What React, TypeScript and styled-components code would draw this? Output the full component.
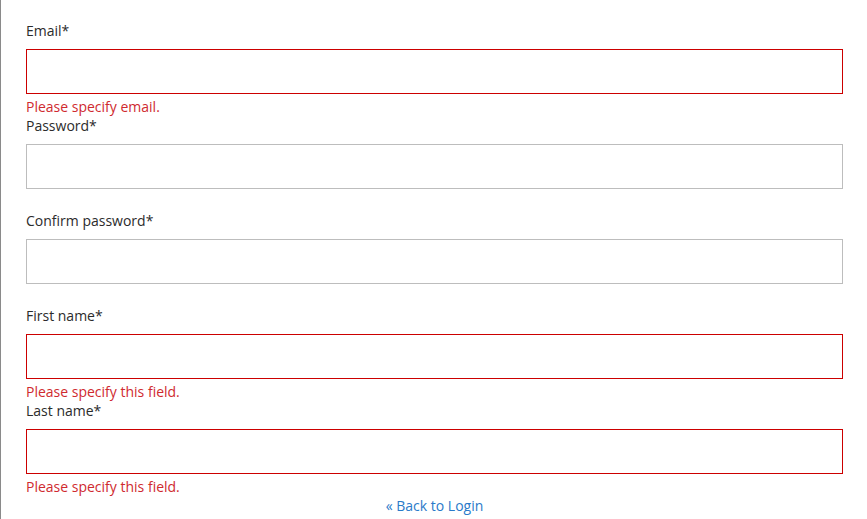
import React from "react";
import styled, { createGlobalStyle } from "styled-components";

const GlobalStyle = createGlobalStyle`
  html, body {
    margin: 0;
    padding: 0;
    background: #ffffff;
  }
  body {
    font-family: "Open Sans", "Liberation Sans", sans-serif;
  }
`;

const Page = styled.div`
  box-sizing: border-box;
  width: 867px;
  height: 519px;
  overflow: hidden;
  border-left: 1px solid #8a8a8a;
  padding: 20px 24px 0 25px;
  display: flex;
  flex-direction: column;
`;

const Field = styled.div`
  display: flex;
  flex-direction: column;
`;

const Label = styled.label`
  font-size: 14px;
  font-weight: 500;
  line-height: 22px;
  color: #2b2b2b;
  margin-bottom: 7px;
`;

const Input = styled.input<{ $invalid?: boolean }>`
  box-sizing: border-box;
  width: 100%;
  height: 45px;
  margin: 0;
  padding: 0 10px;
  border: 1px solid ${(p) => (p.$invalid ? "#cc0000" : "#bdbdbd")};
  border-radius: 0;
  background: #ffffff;
  font: inherit;
  outline: none;
`;

const ErrorSlot = styled.div`
  height: 21px;
  font-size: 14px;
  line-height: 26px;
  color: #cf2a2f;
`;

const LinkRow = styled.div`
  display: flex;
  justify-content: center;
  margin-top: 1px;
`;

const BackLink = styled.a`
  font-size: 14px;
  line-height: 20px;
  color: #2a7ac9;
  text-decoration: none;
  cursor: pointer;
`;

interface FieldProps {
  label: string;
  type?: string;
  error?: string;
}

const FormField: React.FC<FieldProps> = ({ label, type = "text", error }) => (
  <Field>
    <Label>{label}*</Label>
    <Input type={type} $invalid={!!error} />
    <ErrorSlot>{error}</ErrorSlot>
  </Field>
);

const App: React.FC = () => {
  return (
    <>
      <GlobalStyle />
      <Page>
        <FormField label="Email" type="email" error="Please specify email." />
        <FormField label="Password" type="password" />
        <FormField label="Confirm password" type="password" />
        <FormField label="First name" error="Please specify this field." />
        <FormField label="Last name" error="Please specify this field." />
        <LinkRow>
          <BackLink>« Back to Login</BackLink>
        </LinkRow>
      </Page>
    </>
  );
};

export default App;
